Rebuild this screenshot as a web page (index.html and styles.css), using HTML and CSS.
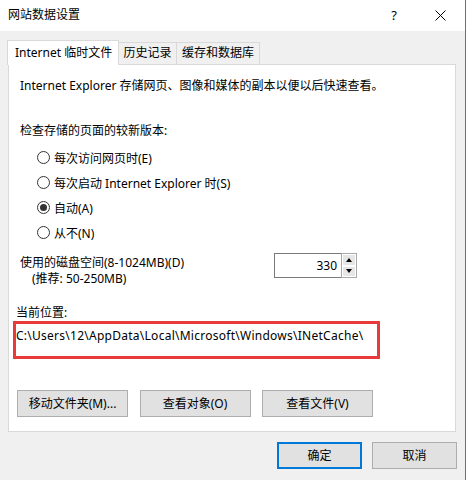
FILE: index.html
```html
<!DOCTYPE html>
<html lang="zh-CN">
<head>
<meta charset="utf-8">
<title>网站数据设置</title>
<link rel="stylesheet" href="styles.css">
</head>
<body>
<div class="window">
  <div class="titlebar">
    <span class="title">网站数据设置</span>
    <span class="help">?</span>
    <span class="close">
      <svg width="11" height="11" viewBox="0 0 11 11"><path d="M0.5 0.5 L10.5 10.5 M10.5 0.5 L0.5 10.5" stroke="#000" stroke-width="1" fill="none"/></svg>
    </span>
  </div>
  <div class="tabs">
    <div class="tab active">Internet 临时文件</div>
    <div class="tab t2">历史记录</div>
    <div class="tab t3">缓存和数据库</div>
  </div>
  <div class="panel">
    <p class="line intro">Internet Explorer 存储网页、图像和媒体的副本以便以后快速查看。</p>
    <p class="line heading">检查存储的页面的较新版本:</p>
    <div class="radios">
      <div class="radio"><span class="dot"></span>每次访问网页时(E)</div>
      <div class="radio"><span class="dot"></span>每次启动 Internet Explorer 时(S)</div>
      <div class="radio"><span class="dot checked"></span>自动(A)</div>
      <div class="radio"><span class="dot"></span>从不(N)</div>
    </div>
    <div class="disk">
      <div class="disk-label">
        <div class="line">使用的磁盘空间(8-1024MB)(D)</div>
        <div class="line sub">(推荐: 50-250MB)</div>
      </div>
      <div class="spin">
        <div class="spin-value">330</div>
        <div class="spin-btns">
          <div class="spin-btn"><span class="arr up"></span></div>
          <div class="spin-btn"><span class="arr down"></span></div>
        </div>
      </div>
    </div>
    <div class="line loc-label">当前位置:</div>
    <div class="loc-box"><span class="line path">C:\Users\12\AppData\Local\Microsoft\Windows\INetCache\</span></div>
    <div class="actions">
      <button class="btn">移动文件夹(M)...</button>
      <button class="btn">查看对象(O)</button>
      <button class="btn">查看文件(V)</button>
    </div>
  </div>
  <div class="footer">
    <button class="btn dlg primary">确定</button>
    <button class="btn dlg">取消</button>
  </div>
</div>
</body>
</html>
```
FILE: styles.css
```css
* { box-sizing: border-box; }
html, body { margin: 0; padding: 0; }
body {
  width: 466px;
  height: 480px;
  background: #f0f0f0;
  font-family: "Noto Sans", "Noto Sans CJK SC", sans-serif;
  font-size: 12px;
  color: #000;
  overflow: hidden;
}
.window {
  width: 466px;
  height: 480px;
  border-right: 1px solid #6f6f6f;
  background: #f0f0f0;
}
.titlebar {
  height: 31px;
  background: #fff;
  display: flex;
  align-items: center;
  padding-left: 8px;
}
.title { flex: 1; line-height: 16px; margin-top: -1px; }
.help { width: 12px; text-align: center; font-size: 13px; line-height: 16px; margin-right: 35px; margin-top: -1px; }
.close { width: 11px; height: 11px; margin-right: 19px; display: flex; margin-top: -1px; }
.tabs {
  display: flex;
  align-items: flex-end;
  margin-top: 9px;
  padding-left: 7px;
  height: 24px;
  position: relative;
  z-index: 1;
}
.tab {
  height: 22px;
  line-height: 20px;
  border: 1px solid #d9d9d9;
  border-bottom: none;
  background: #f0f0f0;
  text-align: center;
  white-space: nowrap;
}
.tab.active {
  width: 112px;
  height: 25px;
  margin-bottom: -1px;
  background: #fff;
  text-align: left;
  padding-left: 7px;
  line-height: 23px;
}
.tab.t2 { width: 58px; border-left: none; }
.tab.t3 { width: 83px; border-left: none; }
.panel {
  margin-left: 8px;
  width: 448px;
  height: 368px;
  background: #fff;
  border: 1px solid #d9d9d9;
  padding-left: 11px;
  padding-top: 13px;
}
.line { margin: 0; line-height: 16px; white-space: nowrap; }
.heading { margin-top: 29px; }
.radios { margin-top: 6px; }
.radio {
  height: 25px;
  display: flex;
  align-items: center;
  padding-left: 17px;
  white-space: nowrap;
}
.dot {
  width: 13px;
  height: 13px;
  border: 1px solid #333;
  border-radius: 50%;
  margin-right: 4px;
  display: flex;
  align-items: center;
  justify-content: center;
  background: #fff;
}
.dot.checked::after {
  content: "";
  width: 7px;
  height: 7px;
  border-radius: 50%;
  background: #333;
}
.disk {
  display: flex;
  margin-top: 8px;
}
.disk-label { width: 254px; padding-top: 2px; }
.sub { padding-left: 12px; }
.spin {
  display: flex;
  width: 83px;
  height: 25px;
}
.spin-value {
  flex: 1;
  border: 1px solid #7a7a7a;
  border-right: none;
  text-align: right;
  padding-right: 4px;
  line-height: 23px;
}
.spin-btns {
  width: 16px;
  display: flex;
  flex-direction: column;
  border: 1px solid #a8a8a8;
  background: #fff;
}
.spin-btn {
  flex: 1;
  background: #e6e6e6;
  border: 1px solid #fff;
  display: flex;
  align-items: center;
  justify-content: center;
}
.arr { width: 0; height: 0; border-left: 3.5px solid transparent; border-right: 3.5px solid transparent; }
.arr.up { border-bottom: 4px solid #000; }
.arr.down { border-top: 4px solid #000; }
.loc-label { margin-top: 18px; margin-left: -4px; }
.loc-box {
  margin-left: -7px;
  width: 367px;
  height: 38px;
  border: 3px solid #e8393b;
  padding-top: 4px;
}
.path { display: block; letter-spacing: 0.26px; }
.actions {
  display: flex;
  gap: 11.5px;
  margin-top: 31px;
  margin-left: -3px;
}
.btn {
  width: 111px;
  height: 27px;
  background: #e1e1e1;
  border: 1px solid #adadad;
  font-family: inherit;
  font-size: 12px;
  color: #000;
  padding: 0;
  line-height: 16px;
}
.footer {
  display: flex;
  justify-content: flex-end;
  gap: 10px;
  margin-top: 10px;
  padding-right: 8px;
}
.btn.dlg { width: 85px; }
.btn.primary { border: 2px solid #0078d7; }
```
